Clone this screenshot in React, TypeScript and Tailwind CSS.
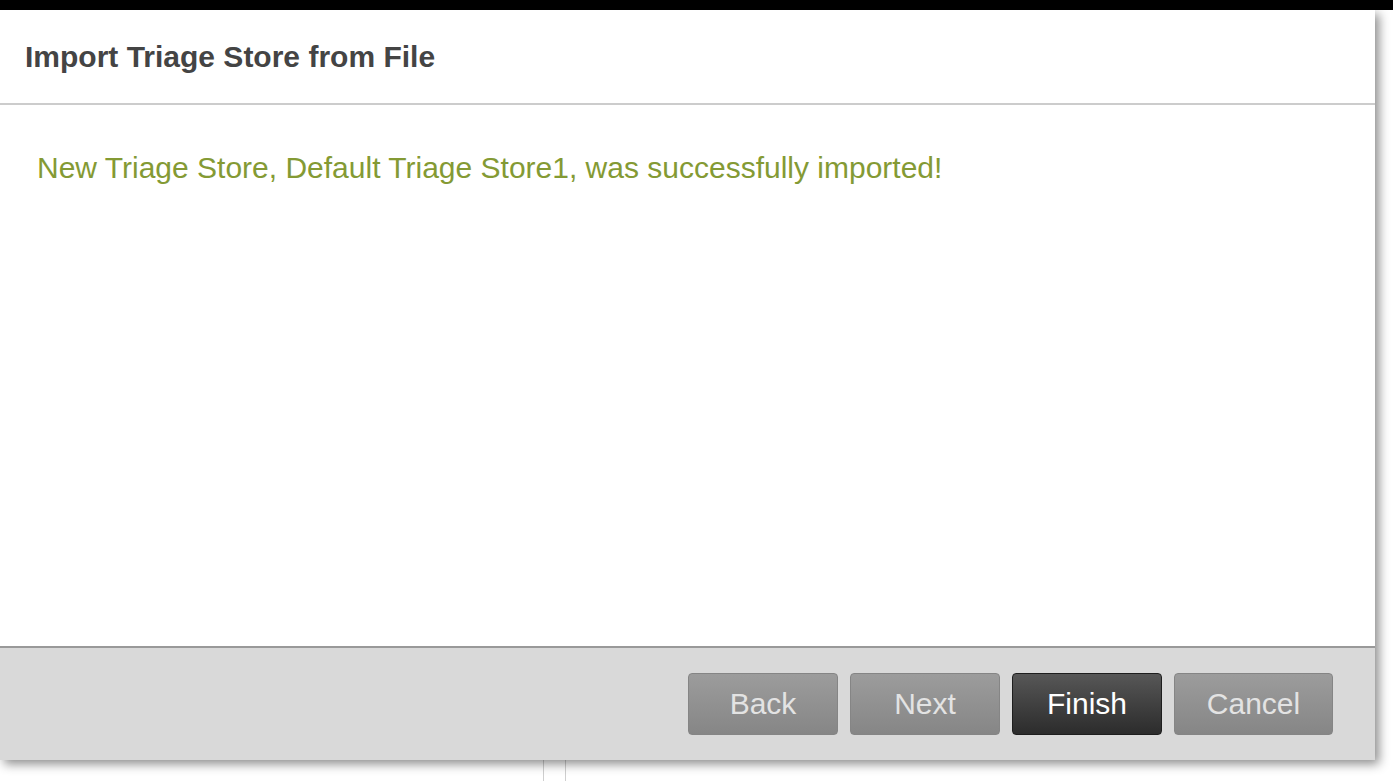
export default function App() {
  const btn =
    "h-[62px] rounded-[4px] border text-[30px] leading-none flex items-center justify-center";
  const disabled =
    "border-[#858585] bg-gradient-to-b from-[#9c9c9c] to-[#868686] text-[#e3e3e3]";
  return (
    <div className="relative h-[781px] w-[1393px] overflow-hidden bg-white font-['Liberation_Sans',Arial,sans-serif]">
      <div className="h-[10px] bg-black" />
      <div className="flex">
        <div className="w-[543px]" />
        <div className="h-[781px] w-[23px] border-x border-[#cfcfcf]" />
      </div>
      <div className="absolute left-0 top-[10px] flex h-[750px] w-[1375px] flex-col bg-white shadow-[4px_4px_10px_rgba(0,0,0,0.45)]">
        <div className="flex h-[95px] items-center border-b-2 border-[#cccccc] pl-[25px]">
          <h1 className="text-[30px] font-bold leading-[34px] text-[#444444]">Import Triage Store from File</h1>
        </div>
        <div className="flex-1 px-[37px] pt-[46px]">
          <p className="text-[30px] leading-[34px] text-[#849a34]">
            New Triage Store, Default Triage Store1, was successfully imported!
          </p>
        </div>
        <div className="flex h-[114px] items-center justify-end gap-[12px] border-t-2 border-[#999999] bg-[#d9d9d9] pr-[42px]">
          <button className={`${btn} ${disabled} w-[150px]`}>Back</button>
          <button className={`${btn} ${disabled} w-[150px]`}>Next</button>
          <button className={`${btn} w-[150px] border-[#1e1e1e] bg-gradient-to-b from-[#575757] to-[#2c2c2c] text-white`}>
            Finish
          </button>
          <button className={`${btn} ${disabled} w-[159px]`}>Cancel</button>
        </div>
      </div>
    </div>
  );
}
